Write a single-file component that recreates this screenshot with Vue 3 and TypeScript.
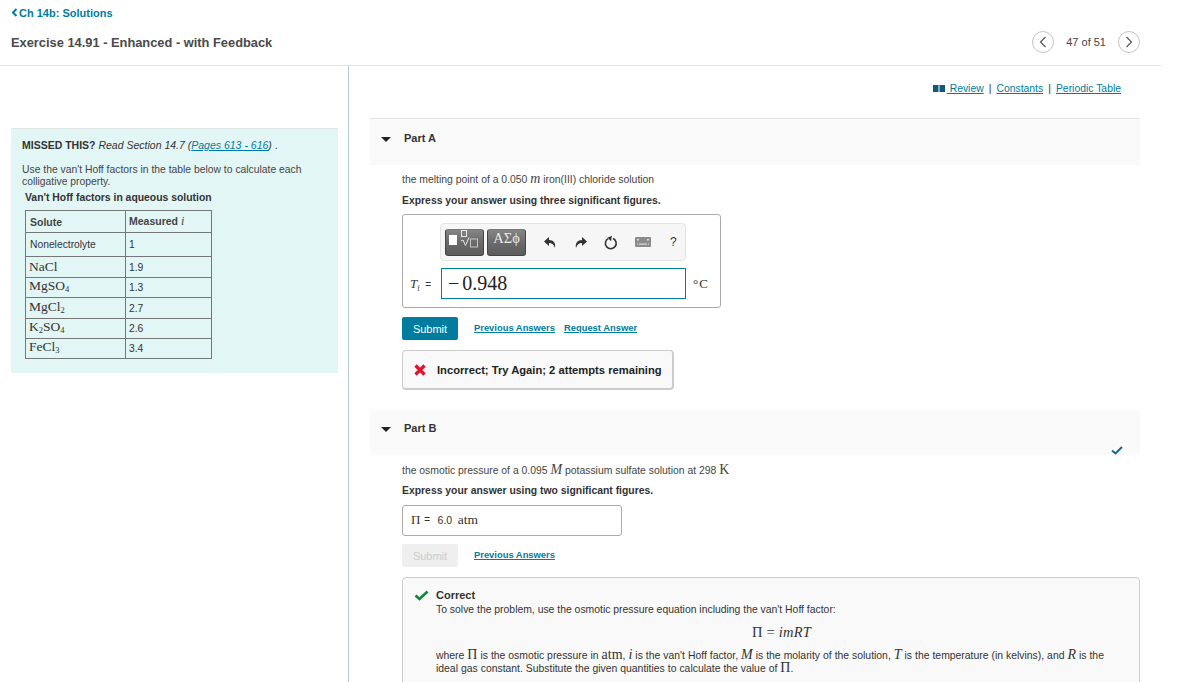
<script setup lang="ts">
interface Row { solute: string; sub?: string; pre?: string; preSub?: string; value: string }
const rows: Row[] = [
  { solute: 'NaCl', value: '1.9' },
  { solute: 'MgSO', sub: '4', value: '1.3' },
  { solute: 'MgCl', sub: '2', value: '2.7' },
  { pre: 'K', preSub: '2', solute: 'SO', sub: '4', value: '2.6' },
  { solute: 'FeCl', sub: '3', value: '3.4' },
]
</script>

<template>
  <div class="page">
    <header class="top">
      <a class="crumb">
        <svg width="7" height="9" viewBox="0 0 7 9"><path d="M5.5 1 L2 4.5 L5.5 8" fill="none" stroke="#007c9e" stroke-width="2" /></svg>
        Ch 14b: Solutions
      </a>
      <div class="titlebar">
        <h1>Exercise 14.91 - Enhanced - with Feedback</h1>
        <div class="pager">
          <span class="circle"><svg width="8" height="12" viewBox="0 0 8 12"><path d="M6.5 1 L1.5 6 L6.5 11" fill="none" stroke="#555" stroke-width="1.2" /></svg></span>
          <span class="count">47 of 51</span>
          <span class="circle"><svg width="8" height="12" viewBox="0 0 8 12"><path d="M1.5 1 L6.5 6 L1.5 11" fill="none" stroke="#555" stroke-width="1.2" /></svg></span>
        </div>
      </div>
    </header>

    <div class="columns">
      <aside class="left">
        <section class="panel">
          <p class="missed"><b>MISSED THIS?</b> <i>Read Section 14.7 (<a>Pages 613 - 616</a>)</i> .</p>
          <p class="intro">Use the van't Hoff factors in the table below to calculate each colligative property.</p>
          <p class="caption">Van't Hoff factors in aqueous solution</p>
          <table>
            <tbody>
              <tr class="rh">
                <th>Solute</th>
                <th>Measured <i class="m">i</i></th>
              </tr>
              <tr class="r1"><td>Nonelectrolyte</td><td>1</td></tr>
              <tr v-for="r in rows" :key="r.value">
                <td class="chem">{{ r.pre }}<sub v-if="r.preSub">{{ r.preSub }}</sub>{{ r.solute }}<sub v-if="r.sub">{{ r.sub }}</sub></td>
                <td>{{ r.value }}</td>
              </tr>
            </tbody>
          </table>
        </section>
      </aside>

      <main class="right">
        <nav class="links">
          <svg class="book" width="12" height="7" viewBox="0 0 12 7"><rect x="0" y="0" width="5.5" height="7" fill="#0e5a78" /><rect x="6.5" y="0" width="5.5" height="7" fill="#0e5a78" /></svg>
          <a>&nbsp;Review</a><span class="sep">|</span><a>Constants</a><span class="sep">|</span><a>Periodic Table</a>
        </nav>

        <div class="part-head first">
          <svg width="10" height="5" viewBox="0 0 10 5"><path d="M0 0 H10 L5 5 Z" fill="#222" /></svg>
          <span>Part A</span>
        </div>
        <div class="part-body">
          <p class="q">the melting point of a 0.050 <i class="m big">m</i> iron(III) chloride solution</p>
          <p class="hint">Express your answer using three significant figures.</p>

          <div class="editor">
            <div class="toolbar">
              <span class="tbtn t1">
                <span class="white"></span>
                <span class="radical">
                  <svg width="24" height="18" viewBox="0 0 24 18">
                    <rect x="3.5" y="0.5" width="5" height="6" fill="none" stroke="#e8e8e8" stroke-width="1" />
                    <path d="M3 11 L5 10 L7.5 15.5 L11 7.5" fill="none" stroke="#e8e8e8" stroke-width="1" />
                    <rect x="12.5" y="9" width="7" height="8" fill="none" stroke="#c4c4c4" stroke-width="1" />
                  </svg>
                </span>
              </span>
              <span class="tbtn t2">ΑΣϕ</span>
              <span class="tools">
                <svg width="14" height="13" viewBox="0 0 14 13"><path d="M6 1 L1 5.5 L6 10 V7 C9 7 11 8.5 12 12 C13 7 10.5 4 6 4 Z" fill="#333" /></svg>
                <svg width="14" height="13" viewBox="0 0 14 13"><path d="M8 1 L13 5.5 L8 10 V7 C5 7 3 8.5 2 12 C1 7 3.5 4 8 4 Z" fill="#333" /></svg>
                <svg class="reload" width="14" height="15" viewBox="0 0 14 15"><path d="M4.2 3.6 A5.4 5.4 0 1 0 9 3.4" fill="none" stroke="#333" stroke-width="1.6" /><path d="M7.5 0.5 V6 L3.5 3.2 Z" fill="#333" transform="rotate(8 6 3)" /></svg>
                <svg class="kbd" width="16" height="10" viewBox="0 0 16 10"><rect width="16" height="10" rx="1" fill="#8c8c8c" /><rect x="2" y="2" width="2" height="1.5" fill="#ddd" /><rect x="12" y="2" width="2" height="1.5" fill="#ddd" /><rect x="4" y="6.5" width="8" height="1.2" fill="#ddd" /><rect x="2" y="6.5" width="1" height="1.2" fill="#ddd" /><rect x="13" y="6.5" width="1" height="1.2" fill="#ddd" /></svg>
                <span class="qm">?</span>
              </span>
            </div>
            <div class="eq-row">
              <span class="lhs"><i class="m">T</i><sub class="m">f</sub>&nbsp; =</span>
              <span class="field">−<span class="gap"></span>0.948</span>
              <span class="unit">°C</span>
            </div>
          </div>

          <div class="actions">
            <button class="submit">Submit</button>
            <a>Previous Answers</a>
            <a>Request Answer</a>
          </div>

          <div class="wrong">
            <svg width="12" height="12" viewBox="0 0 12 12"><path d="M1.5 1.5 L10.5 10.5 M10.5 1.5 L1.5 10.5" stroke="#e8112d" stroke-width="3.2" /></svg>
            <b>Incorrect; Try Again; 2 attempts remaining</b>
          </div>
        </div>

        <div class="part-head second">
          <svg width="10" height="5" viewBox="0 0 10 5"><path d="M0 0 H10 L5 5 Z" fill="#222" /></svg>
          <span>Part B</span>
          <svg class="done" width="12" height="9" viewBox="0 0 12 9"><path d="M1 4.5 L4.5 7.5 L11 1" fill="none" stroke="#0e6a8a" stroke-width="2" /></svg>
        </div>
        <div class="part-body body-b">
          <p class="q">the osmotic pressure of a 0.095 <i class="m big">M</i> potassium sulfate solution at 298 <span class="m big">K</span></p>
          <p class="hint">Express your answer using two significant figures.</p>
          <div class="answer"><span class="m pi">Π</span> = &nbsp;<span class="val">6.0</span> &nbsp;<span class="m atm">atm</span></div>
          <div class="actions two">
            <button class="submit off">Submit</button>
            <a>Previous Answers</a>
          </div>
          <div class="correct">
            <svg width="15" height="11" viewBox="0 0 15 11"><path d="M1.5 5.5 L5.5 9 L13.5 1.5" fill="none" stroke="#0a8a3c" stroke-width="2.6" /></svg>
            <div class="correct-text">
              <b>Correct</b>
              <p>To solve the problem, use the osmotic pressure equation including the van't Hoff factor:</p>
              <p class="formula m"><span>Π = </span><i>imRT</i></p>
              <p class="last">where <span class="m big">Π</span> is the osmotic pressure in <span class="m big">atm</span>, <i class="m big">i</i> is the van't Hoff factor, <i class="m big">M</i> is the molarity of the solution, <i class="m big">T</i> is the temperature (in kelvins), and <i class="m big">R</i> is the ideal gas constant. Substitute the given quantities to calculate the value of <span class="m big">Π</span>.</p>
            </div>
          </div>
        </div>
      </main>
    </div>
  </div>
</template>

<style scoped>
.page {
  width: 1161px;
  height: 682px;
  overflow: hidden;
  font-family: "Liberation Sans", Arial, sans-serif;
  font-size: 11px;
  color: #333;
  background: #fff;
}
p { margin: 0; }
a { color: #007c9e; }
.m { font-family: "Liberation Serif", "DejaVu Serif", serif; }
.big { font-size: 14px; line-height: 0; }

.top {
  border-bottom: 1px solid #dfe3e6;
  padding: 6px 21px 0 11px;
  height: 59px;
}
.crumb {
  display: flex;
  align-items: center;
  gap: 1px;
  height: 13px;
  font-size: 11px;
  font-weight: 700;
  color: #007c9e;
}
.titlebar {
  display: flex;
  justify-content: space-between;
  align-items: center;
  margin-top: 10px;
  height: 26px;
}
h1 {
  margin: 0;
  font-size: 12.85px;
  font-weight: 700;
  color: #4a4a4a;
}
.pager {
  display: flex;
  align-items: center;
  gap: 12px;
}
.count { font-size: 11px; color: #444; }
.circle {
  width: 20px;
  height: 20px;
  border: 1px solid #c4c4c4;
  border-radius: 50%;
  display: flex;
  align-items: center;
  justify-content: center;
}

.columns { display: flex; height: 616px; }
.left {
  flex: none;
  border-right: 1px solid #b9cad9;
  padding: 62px 10px 0 11px;
  box-sizing: border-box;
  width: 349px;
}
.panel {
  height: 245px;
  box-sizing: border-box;
  background: #e2f6f6;
  border-top: 1px solid #dde5e5;
  padding: 10px 11px 0;
}
.missed { font-size: 10.5px; line-height: 12px; margin-bottom: 13px; color: #333; }
.missed a { text-decoration: underline; }
.intro { font-size: 10.35px; line-height: 12px; width: 290px; color: #444; }
.caption { font-size: 10.4px; font-weight: 700; line-height: 13px; margin: 3px 0 6px 3px; color: #333; }
table {
  border-collapse: collapse;
  margin-left: 3px;
  width: 187px;
  font-size: 10.3px;
  table-layout: fixed;
}
th, td {
  border: 1px solid #777;
  text-align: left;
  padding: 0 3px;
  height: 20px;
  box-sizing: border-box;
  color: #333;
  font-weight: 400;
}
th { font-weight: 700; font-size: 10.5px; color: #444; height: 22px; }
th i { font-size: 12px; font-weight: 400; }
th:first-child, td:first-child { width: 100px; padding-left: 4px; }
.r1 td { height: 24px; }
tr:nth-child(3) td, tr:nth-child(5) td { height: 21px; }
td.chem { font-family: "Liberation Serif", serif; font-size: 13.5px; padding-left: 3px; line-height: 0; }
.chem sub { font-size: 8.5px; line-height: 0; vertical-align: -2px; }

.right { flex: 1; padding: 0 21px 0 21px; min-width: 0; }
.links {
  display: flex;
  justify-content: flex-end;
  align-items: center;
  height: 52px;
  padding: 0 19px 7px 0;
  box-sizing: border-box;
  font-size: 10.4px;
}
.links a { text-decoration: underline; }
.book { margin-right: 2px; }
.sep { margin: 0 5px; color: #333; }

.part-head {
  display: flex;
  gap: 13px;
  height: 47px;
  box-sizing: border-box;
  background: #fafafa;
  padding: 13px 0 0 11px;
  font-size: 11px;
  font-weight: 700;
  color: #333;
  position: relative;
}
.part-head svg:first-child { margin-top: 5px; }
.part-head.first { border-top: 1px solid #e2e2e2; }
.part-head.second { height: 45px; margin-top: 20px; padding-top: 12px; }
.done { position: absolute; right: 17px; bottom: 0; }

.part-body { padding-left: 32px; }
.q { font-size: 10.4px; line-height: 14px; margin-top: 8px; color: #444; }
.hint { font-size: 10.4px; font-weight: 700; line-height: 13px; margin-top: 7px; color: #333; }
.body-b .q { margin-top: 9px; }
.body-b .hint { margin-top: 6px; }

.editor {
  width: 319px;
  height: 94px;
  box-sizing: border-box;
  margin-top: 7px;
  border: 1px solid #aaa;
  border-radius: 3px;
  padding: 8px 0 0 37px;
}
.toolbar {
  width: 246px;
  height: 38px;
  box-sizing: border-box;
  background: #f6f6f6;
  border: 1px solid #e4e4e4;
  border-radius: 4px;
  padding: 5px 4px;
  display: flex;
  gap: 3px;
}
.tbtn {
  height: 27px;
  box-sizing: border-box;
  border-radius: 3px;
  border: 1px solid #444;
  border-top-color: #777;
  background: linear-gradient(#858585, #6a6a6a 50%, #5c5c5c);
  color: #eee;
  display: flex;
  align-items: flex-start;
  flex: none;
}
.t1 { width: 39px; position: relative; padding: 5px 0 0 3px; }
.white { width: 8px; height: 10px; background: #fff; }
.radical { position: absolute; left: 12px; top: 0; line-height: 0; }
.t2 {
  width: 39px;
  justify-content: center;
  font-family: "Liberation Serif", "DejaVu Serif", serif;
  font-size: 14.5px;
  line-height: 15px;
  padding-top: 1px;
  color: #eaeaea;
}
.tools {
  display: flex;
  align-items: center;
  gap: 17px;
  padding: 0 0 0 14px;
  height: 26px;
}
.tools .reload { margin-left: -1px; }
.qm { font-size: 12px; color: #333; margin-left: 2px; }
.eq-row {
  display: flex;
  align-items: center;
  margin-top: 7px;
  margin-left: -30px;
}
.lhs {
  width: 31px;
  flex: none;
  font-size: 10px;
  color: #333;
  white-space: nowrap;
}
.lhs i { font-size: 13px; }
.lhs sub { font-size: 7.5px; line-height: 0; }
.field {
  width: 245px;
  height: 31px;
  box-sizing: border-box;
  border: 1px solid #007c9e;
  font-family: "Liberation Serif", serif;
  font-size: 20px;
  line-height: 29px;
  padding-left: 6px;
  color: #222;
}
.gap { display: inline-block; width: 3px; }
.unit { font-family: "Liberation Serif", serif; font-size: 13px; letter-spacing: 1px; margin-left: 7px; color: #333; }

.actions {
  display: flex;
  align-items: center;
  gap: 9px;
  margin-top: 9px;
  height: 23px;
  font-size: 9.4px;
  font-weight: 700;
}
.actions a { text-decoration: underline; margin-bottom: 2px; }
.submit {
  width: 56px;
  height: 23px;
  padding: 0;
  margin-right: 7px;
  border: 0;
  border-radius: 2px;
  background: #007c9e;
  color: #fff;
  font-family: "Liberation Sans", Arial, sans-serif;
  font-size: 11px;
}
.submit.off { background: #efefef; color: #ccc; }
.wrong {
  width: 272px;
  height: 40px;
  box-sizing: border-box;
  margin-top: 10px;
  border: 1px solid #ccc;
  border-bottom-width: 2px;
  border-right-width: 2px;
  border-radius: 4px;
  background: #f9f9f9;
  display: flex;
  align-items: center;
  gap: 11px;
  padding-left: 11px;
  font-size: 11.2px;
  color: #222;
}

.answer {
  width: 220px;
  height: 31px;
  box-sizing: border-box;
  margin-top: 8px;
  border: 1px solid #aaa;
  border-radius: 3px;
  padding: 0 0 2px 8px;
  display: flex;
  align-items: center;
  font-size: 10px;
  white-space: pre;
  color: #333;
}
.pi { font-size: 13px; margin-right: 1px; }
.val { font-size: 10.5px; margin-left: 2px; }
.atm { font-size: 13.5px; }
.two { margin-top: 8px; }
.correct {
  width: 738px;
  height: 130px;
  box-sizing: border-box;
  margin-top: 10px;
  border: 1px solid #ccc;
  border-radius: 4px;
  background: #f9f9f9;
  padding: 11px 0 0 11px;
  display: flex;
  gap: 7px;
}
.correct svg { margin-top: 1px; flex: none; }
.correct-text { font-size: 10.4px; line-height: 13px; color: #333; width: 676px; flex: none; }
.correct-text b { font-size: 11px; display: block; }
.correct-text p { margin-top: 1px; }
.formula { text-align: center; font-size: 14.5px; margin-top: 9px !important; padding-left: 15px; line-height: 15px; letter-spacing: 0.2px; }
.last { margin-top: 9px !important; line-height: 13px; word-spacing: 0.1px; }
</style>

<style>
html, body { margin: 0; background: #fff; overflow: hidden; }
</style>
